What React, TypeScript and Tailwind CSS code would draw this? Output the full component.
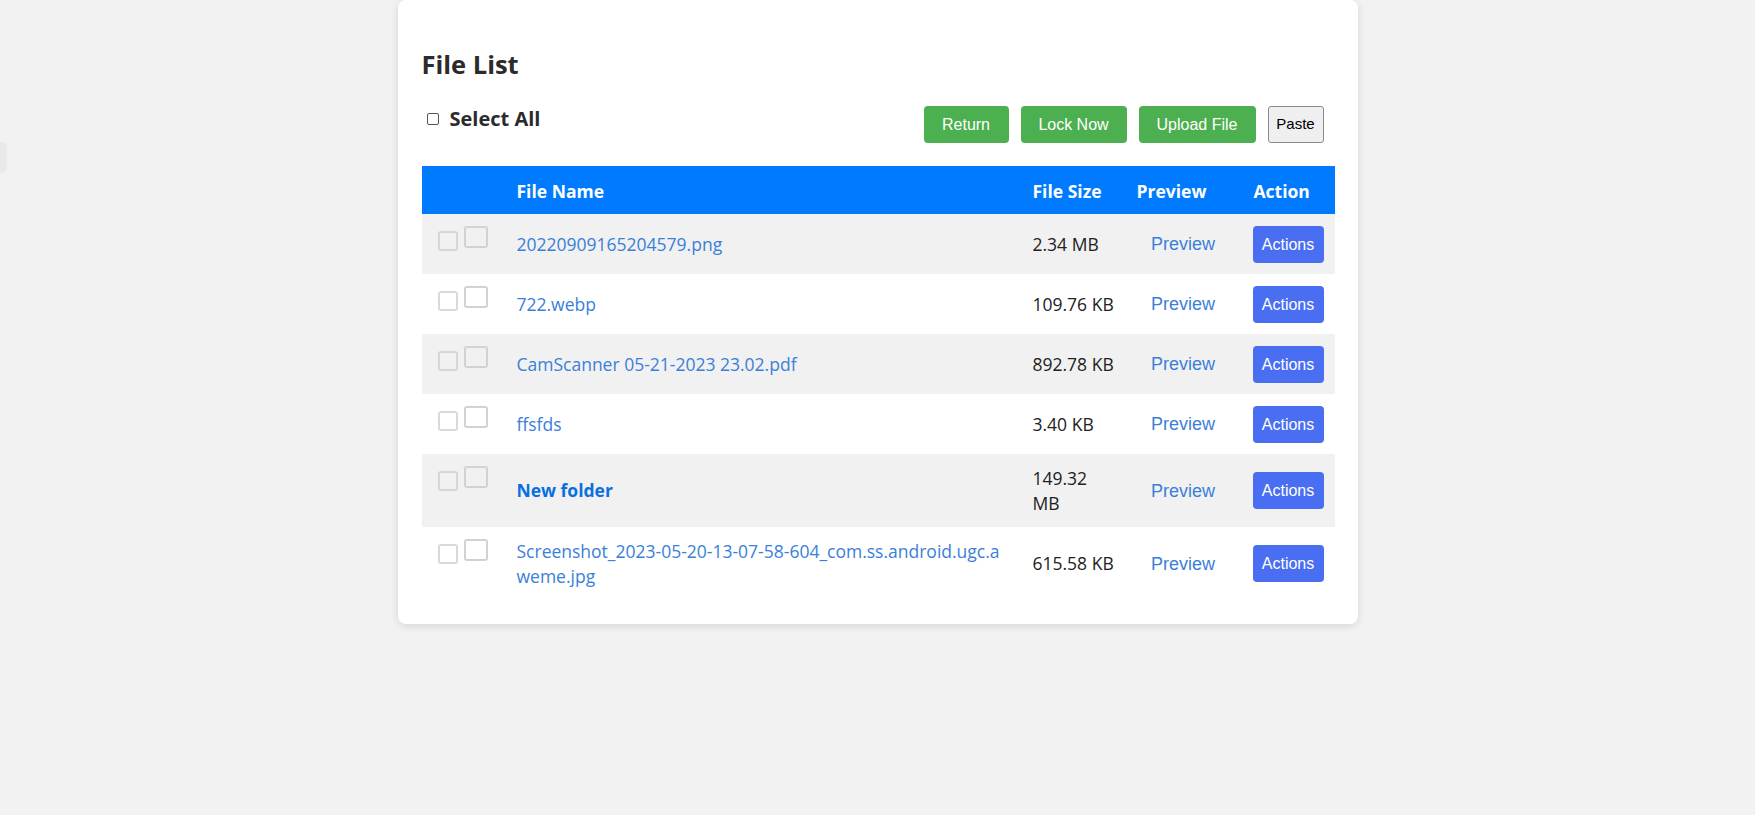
import React from "react";

const files = [
  { name: "20220909165204579.png", size: "2.34 MB" },
  { name: "722.webp", size: "109.76 KB" },
  { name: "CamScanner 05-21-2023 23.02.pdf", size: "892.78 KB" },
  { name: "ffsfds", size: "3.40 KB" },
  { name: "New folder", size: "149.32 MB", folder: true },
  { name: "Screenshot_2023-05-20-13-07-58-604_com.ss.android.ugc.aweme.jpg", size: "615.58 KB" },
];

function GreenButton({ label, width }: { label: string; width: string }) {
  return (
    <button
      className={`h-[37px] ${width} rounded-[4px] bg-[#4caf50] text-[16px] text-white font-['Liberation_Sans',Arial,sans-serif]`}
    >
      {label}
    </button>
  );
}

export default function App() {
  return (
    <div className="relative min-h-[815px] bg-[#f2f2f2] font-['Open_Sans',sans-serif] text-[#222]">
      {/* little tab stuck on the left edge */}
      <div className="absolute left-0 top-[143px] h-[29px] w-[6px] rounded-r-[3px] bg-[#e9e9e9] shadow-[0_0_3px_rgba(0,0,0,0.08)]" />

      <div className="mx-auto w-[960px] rounded-[8px] bg-white px-6 pt-6 pb-6 shadow-[0_2px_8px_rgba(0,0,0,0.12)]">
        <h2 className="mt-[23px] text-[25.5px] font-bold leading-[35px] text-[#2b2b2b]">File List</h2>

        <div className="mt-[23px] flex items-start justify-between">
          <label className="flex items-center pl-[5px] text-[20px] font-bold leading-[27px] text-[#2b2b2b]">
            <span className="h-[12px] w-[12px] rounded-[2px] border border-[#555] bg-white" />
            <span className="ml-[11px]">Select All</span>
          </label>
          <div className="mr-[10px] mt-[1px] flex gap-3">
            <GreenButton label="Return" width="w-[85px]" />
            <GreenButton label="Lock Now" width="w-[106px]" />
            <GreenButton label="Upload File" width="w-[117px]" />
            <button className="h-[37px] w-[56px] rounded-[3px] border border-[#8a8a8a] bg-[#efefef] text-[15px] text-black font-['Liberation_Sans',Arial,sans-serif]">
              Paste
            </button>
          </div>
        </div>

        <table className="mt-[23px] w-[913px] table-fixed border-collapse">
          <colgroup>
            <col className="w-[83px]" />
            <col className="w-[516px]" />
            <col className="w-[104px]" />
            <col className="w-[117px]" />
            <col className="w-[93px]" />
          </colgroup>
          <thead>
            <tr className="h-[48px] bg-[#007bff] text-left text-[17.5px] font-bold text-white">
              <th className="px-3 pt-[3px]"></th>
              <th className="px-3 pt-[3px]">File Name</th>
              <th className="px-3 pt-[3px]">File Size</th>
              <th className="px-3 pt-[3px]">Preview</th>
              <th className="px-3 pt-[3px]">Action</th>
            </tr>
          </thead>
          <tbody className="text-[17.5px] leading-[25px]">
            {files.map((f, i) => (
              <tr key={f.name} className={i % 2 === 0 ? "bg-[#f1f1f1]" : "bg-white"}>
                <td className="px-3 pt-[12px] align-top">
                  <div className="flex items-start">
                    <span className="ml-[4px] mt-[5px] h-[20px] w-[20px] rounded-[3px] border-2 border-[#cfcfcf] opacity-80" />
                    <span className="ml-[6px] h-[22px] w-[24px] rounded-[3px] border-2 border-[#d2d2d2]" />
                  </div>
                </td>
                <td className="break-all px-3 py-[11.5px] align-middle">
                  <a
                    href="#"
                    className={f.folder ? "font-bold text-[#0a6fe0]" : "text-[#3a80d9]"}
                  >
                    {f.name}
                  </a>
                </td>
                <td className="py-[11.5px] pl-3 pr-[6px] align-middle text-[#222]">{f.size}</td>
                <td className="px-3 py-[11.5px] text-center align-middle">
                  <a href="#" className="text-[18px] text-[#3a80d9] font-['Liberation_Sans',Arial,sans-serif]">
                    Preview
                  </a>
                </td>
                <td className="py-[11.5px] pl-[11px] align-middle">
                  <button className="h-[37px] w-[71px] rounded-[4px] bg-[#4a6ef2] text-[16px] text-white font-['Liberation_Sans',Arial,sans-serif]">
                    Actions
                  </button>
                </td>
              </tr>
            ))}
          </tbody>
        </table>
      </div>
    </div>
  );
}
